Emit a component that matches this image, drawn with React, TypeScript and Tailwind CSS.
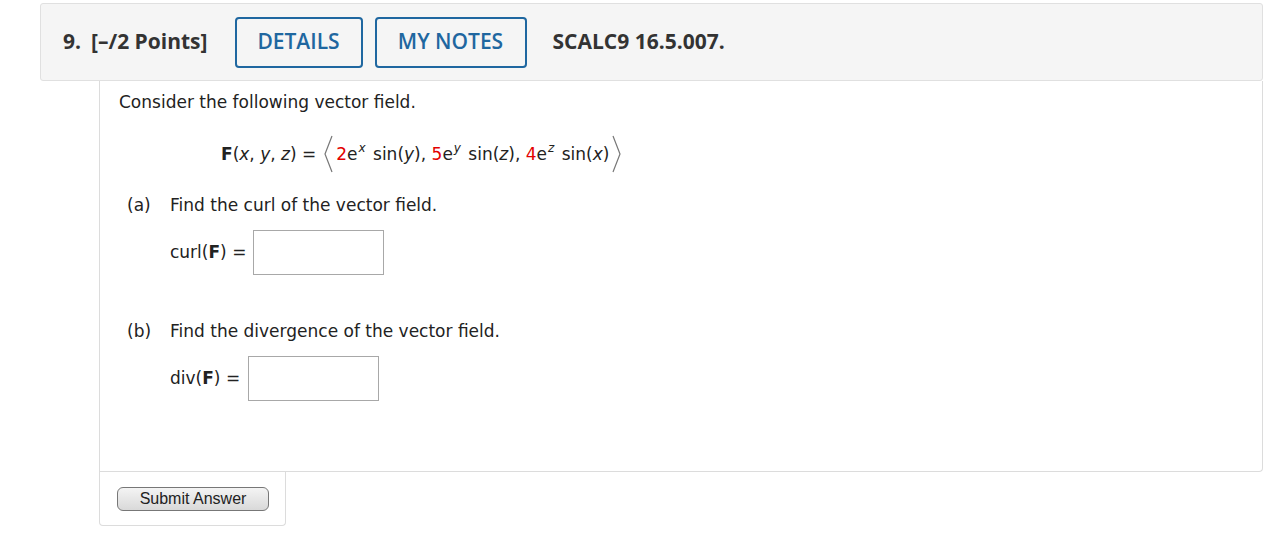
import React from 'react';

function Bracket({ side }: { side: 'left' | 'right' }) {
  return (
    <svg width="12" height="38" viewBox="0 0 12 38" className="mx-[2px]">
      {side === 'left' ? (
        <polyline points="10,1 3,19 10,37" fill="none" stroke="#777" strokeWidth="1.2" />
      ) : (
        <polyline points="2,1 9,19 2,37" fill="none" stroke="#777" strokeWidth="1.2" />
      )}
    </svg>
  );
}

function Term({ coef, sup, arg }: { coef: string; sup: string; arg: string }) {
  return (
    <span>
      <span className="text-[#e30000]">{coef}</span>e
      <sup className="text-[12px] italic relative -top-[8px] ml-[1px] mr-[2px]">{sup}</sup> sin(<i>{arg}</i>)
    </span>
  );
}

export default function App() {
  return (
    <div className="w-[1284px] h-[538px] bg-white pt-[3px]">
      {/* header */}
      <div className="ml-[40px] w-[1223px] h-[78px] bg-[#f5f5f5] border border-[#e0e0e0] rounded-[3px] flex items-center font-[family-name:'Open_Sans',sans-serif] text-[21px] text-[#333]">
        <span className="ml-[22px] font-bold">9.</span>
        <span className="ml-[10px] font-bold">[–/2 Points]</span>
        <button className="ml-[27px] w-[128px] h-[51px] border-2 border-[#1f67a0] rounded-[4px] text-[#1f67a0] font-semibold bg-transparent">
          DETAILS
        </button>
        <button className="ml-[12px] w-[152px] h-[51px] border-2 border-[#1f67a0] rounded-[4px] text-[#1f67a0] font-semibold bg-transparent">
          MY NOTES
        </button>
        <span className="ml-[26px] font-bold">SCALC9 16.5.007.</span>
      </div>

      {/* body */}
      <div className="ml-[99px] w-[1164px] h-[391px] border-x border-b border-[#dcdcdc] rounded-br-[4px] pl-[19px] text-[17px] text-[#222] font-[family-name:'DejaVu_Sans',Verdana,sans-serif]">
        <div className="pt-[10px] leading-[22px]">Consider the following vector field.</div>
        <div className="mt-[22px] ml-[102px] flex items-center h-[38px] leading-[22px]">
          <span>
            <b>F</b>(<i>x</i>, <i>y</i>, <i>z</i>) =
          </span>
          <span className="ml-[4px] flex items-center">
            <Bracket side="left" />
            <Term coef="2" sup="x" arg="y" />
            <span>,&nbsp;</span>
            <Term coef="5" sup="y" arg="z" />
            <span>,&nbsp;</span>
            <Term coef="4" sup="z" arg="x" />
            <Bracket side="right" />
          </span>
        </div>
        <div className="mt-[21px] flex leading-[22px]">
          <span className="ml-[8px] w-[43px]">(a)</span>
          <span>Find the curl of the vector field.</span>
        </div>
        <div className="mt-[14px] ml-[51px] flex items-center">
          <span>
            curl(<b>F</b>) =
          </span>
          <div className="ml-[7px] w-[131px] h-[45px] border border-[#a8a8a8] bg-white" />
        </div>
        <div className="mt-[45px] flex leading-[22px]">
          <span className="ml-[8px] w-[43px]">(b)</span>
          <span>Find the divergence of the vector field.</span>
        </div>
        <div className="mt-[14px] ml-[51px] flex items-center">
          <span>
            div(<b>F</b>) =
          </span>
          <div className="ml-[8px] w-[131px] h-[45px] border border-[#a8a8a8] bg-white" />
        </div>
      </div>

      {/* submit */}
      <div className="ml-[99px] w-[187px] h-[54px] border-x border-b border-[#dcdcdc] rounded-b-[4px] flex items-center">
        <button className="ml-[17px] w-[152px] h-[24px] rounded-[6px] border border-[#777] bg-gradient-to-b from-[#f4f4f4] to-[#d9d9d9] font-[family-name:'Liberation_Sans',Arial,sans-serif] text-[16px] text-[#222] leading-none">
          Submit Answer
        </button>
      </div>
    </div>
  );
}
